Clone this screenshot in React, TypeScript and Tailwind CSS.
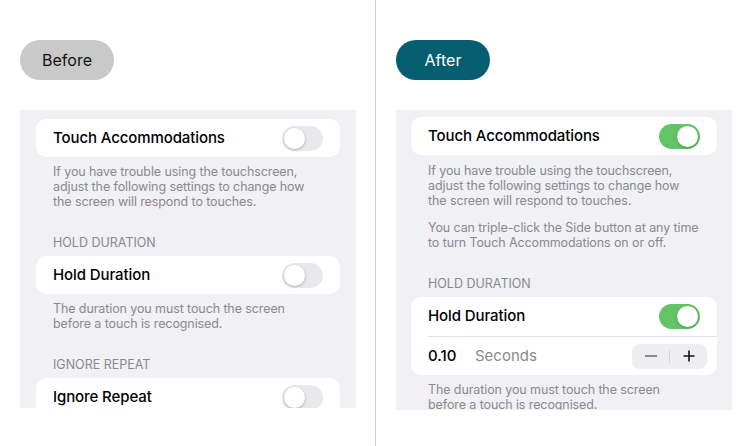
import React from 'react'

const FONT = { fontFamily: 'Inter, "Noto Sans", sans-serif' }

function Toggle({ on }: { on: boolean }) {
  return (
    <span
      className={`relative inline-block w-[41px] h-[25px] rounded-full shrink-0 ${on ? 'bg-[#62c465]' : 'bg-[#e9e9eb]'}`}
    >
      <span
        className={`absolute top-[2px] w-[21px] h-[21px] rounded-full bg-white shadow-[0_1px_3px_rgba(0,0,0,0.25)] ${on ? 'right-[2px]' : 'left-[2px]'}`}
      />
    </span>
  )
}

function Row({ label, on }: { label: string; on: boolean }) {
  return (
    <div className="flex items-center justify-between h-[38px] pl-[17px] pr-[17px]">
      <span className="text-[15px] font-medium text-black tracking-[-0.1px]">{label}</span>
      <Toggle on={on} />
    </div>
  )
}

function Note({ children }: { children: React.ReactNode }) {
  return (
    <p className="px-[17px] text-[12.5px] leading-[15px] text-[#8a8a8e] whitespace-nowrap tracking-[-0.1px]">
      {children}
    </p>
  )
}

function Header({ children }: { children: React.ReactNode }) {
  return <p className="px-[17px] mt-[26px] mb-[6px] text-[12.5px] leading-[15px] text-[#8a8a8e]">{children}</p>
}

function Before() {
  return (
    <div className="mx-[16px] pt-[9px]">
      <div className="bg-white rounded-[10px]">
        <Row label="Touch Accommodations" on={false} />
      </div>
      <div className="pt-[7px]">
        <Note>
          If you have trouble using the touchscreen,
          <br />
          adjust the following settings to change how
          <br />
          the screen will respond to touches.
        </Note>
      </div>
      <Header>HOLD DURATION</Header>
      <div className="bg-white rounded-[10px]">
        <Row label="Hold Duration" on={false} />
      </div>
      <div className="pt-[7px]">
        <Note>
          The duration you must touch the screen
          <br />
          before a touch is recognised.
        </Note>
      </div>
      <Header>IGNORE REPEAT</Header>
      <div className="bg-white rounded-[10px]">
        <Row label="Ignore Repeat" on={false} />
      </div>
    </div>
  )
}

function After() {
  return (
    <div className="mx-[15px] pt-[7px]">
      <div className="bg-white rounded-[10px]">
        <Row label="Touch Accommodations" on={true} />
      </div>
      <div className="pt-[8px] flex flex-col gap-[12px]">
        <Note>
          If you have trouble using the touchscreen,
          <br />
          adjust the following settings to change how
          <br />
          the screen will respond to touches.
        </Note>
        <Note>
          You can triple-click the Side button at any time
          <br />
          to turn Touch Accommodations on or off.
        </Note>
      </div>
      <Header>HOLD DURATION</Header>
      <div className="bg-white rounded-[10px]">
        <div className="h-[39px] flex items-center justify-between pl-[17px] pr-[17px]">
          <span className="text-[15px] font-medium text-black tracking-[-0.1px]">Hold Duration</span>
          <Toggle on={true} />
        </div>
        <div className="ml-[17px] border-t border-[#e4e4e6]" />
        <div className="h-[38px] flex items-center pl-[17px] pr-[10px]">
          <span className="text-[15px] font-medium text-black w-[47px]">0.10</span>
          <span className="text-[15px] text-[#8a8a8e]">Seconds</span>
          <div className="ml-auto flex items-center w-[75px] h-[25px] rounded-[8px] bg-[#eeeef0]">
            <span className="flex-1 flex justify-center">
              <span className="block w-[12px] h-[1.5px] bg-[#8a8a8e]" />
            </span>
            <span className="w-px h-[13px] bg-[#d6d6d8]" />
            <span className="flex-1 flex justify-center">
              <svg width="12" height="12" viewBox="0 0 12 12">
                <path d="M6 0.5v11M0.5 6h11" stroke="#111" strokeWidth="1.6" />
              </svg>
            </span>
          </div>
        </div>
      </div>
      <div className="pt-[7px]">
        <Note>
          The duration you must touch the screen
          <br />
          before a touch is recognised.
        </Note>
      </div>
    </div>
  )
}

export default function App() {
  return (
    <div className="w-[752px] h-[446px] bg-white flex" style={FONT}>
      <div className="w-[376px] pl-[20px] pt-[40px] border-r border-[#cccccc]">
        <div className="w-[94px] h-[40px] rounded-full bg-[#c9c9c9] flex items-center justify-center text-[16px] text-[#111]">
          Before
        </div>
        <div className="mt-[30px] w-[336px] h-[298px] bg-[#f0f0f5] overflow-hidden">
          <Before />
        </div>
      </div>
      <div className="w-[375px] pl-[20px] pt-[40px]">
        <div className="w-[94px] h-[40px] rounded-full bg-[#055e6f] flex items-center justify-center text-[16px] text-white">
          After
        </div>
        <div className="mt-[30px] w-[336px] h-[300px] bg-[#f0f0f5] overflow-hidden">
          <After />
        </div>
      </div>
    </div>
  )
}
